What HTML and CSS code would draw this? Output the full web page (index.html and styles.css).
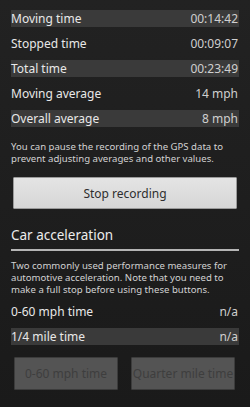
FILE: index.html
```html
<!DOCTYPE html>
<html>
<head>
<meta charset="utf-8">
<link rel="stylesheet" href="styles.css">
</head>
<body>
<div class="screen">
  <div class="stats">
    <div class="row band"><span class="label">Moving time</span><span class="value">00:14:42</span></div>
    <div class="row"><span class="label">Stopped time</span><span class="value">00:09:07</span></div>
    <div class="row band"><span class="label">Total time</span><span class="value">00:23:49</span></div>
    <div class="row"><span class="label">Moving average</span><span class="value">14 mph</span></div>
    <div class="row band"><span class="label">Overall average</span><span class="value">8 mph</span></div>
  </div>
  <p class="note first">You can pause the recording of the GPS data to prevent adjusting averages and other values.</p>
  <button class="btn primary">Stop recording</button>
  <h2 class="heading">Car acceleration</h2>
  <p class="note second">Two commonly used performance measures for automotive acceleration. Note that you need to make a full stop before using these buttons.</p>
  <div class="stats">
    <div class="row"><span class="label">0-60 mph time</span><span class="value">n/a</span></div>
    <div class="row band"><span class="label">1/4 mile time</span><span class="value">n/a</span></div>
  </div>
  <div class="btn-pair">
    <button class="btn disabled">0-60 mph time</button>
    <button class="btn disabled">Quarter mile time</button>
  </div>
</div>
</body>
</html>
```
FILE: styles.css
```css
html, body {
  margin: 0;
  padding: 0;
  background: #1d1d1d;
}
.screen {
  width: 250px;
  height: 407px;
  box-sizing: border-box;
  padding: 10px 11px 0 11px;
  font-family: "Noto Sans", "Open Sans", sans-serif;
  color: #e6e6e6;
  background: linear-gradient(180deg, #222 0%, #1e1e1e 50%, #1a1a1a 100%);
}
.stats {
  display: flex;
  flex-direction: column;
  gap: 8px;
}
.row {
  height: 17px;
  display: flex;
  justify-content: space-between;
  align-items: center;
  font-size: 12px;
  line-height: 17px;
}
.row.band {
  background: #3a3a3a;
}
.label {
  color: #e8e8e8;
}
.value {
  color: #cfcfcf;
  padding-right: 1px;
}
.note {
  margin: 0;
  font-size: 9.6px;
  line-height: 12px;
  color: #d2d2d2;
}
.note.first {
  margin-top: 14px;
}
.note.second {
  margin-top: 9px;
  margin-bottom: 7px;
}
.btn {
  display: block;
  font-family: "Noto Sans", "Open Sans", sans-serif;
  font-size: 12px;
  border-radius: 1px;
  padding: 0;
}
.btn.primary {
  margin: 12px 2px 0 2px;
  width: 224px;
  height: 32px;
  background: linear-gradient(180deg, #e4e4e4 0%, #d6d6d6 100%);
  border: 1px solid #9a9a9a;
  color: #2e2e2e;
}
.heading {
  margin: 17px 0 0 0;
  font-weight: normal;
  font-size: 13.5px;
  line-height: 18px;
  color: #ececec;
  padding-bottom: 5px;
  border-bottom: 2px solid #b5b5b5;
}
.btn-pair {
  display: flex;
  gap: 13px;
  margin: 12px 3px 0 3px;
}
.btn.disabled {
  width: 104px;
  height: 33px;
  background: #545454;
  border: 1px solid #3c3c3c;
  color: #3e3e3e;
}
```
